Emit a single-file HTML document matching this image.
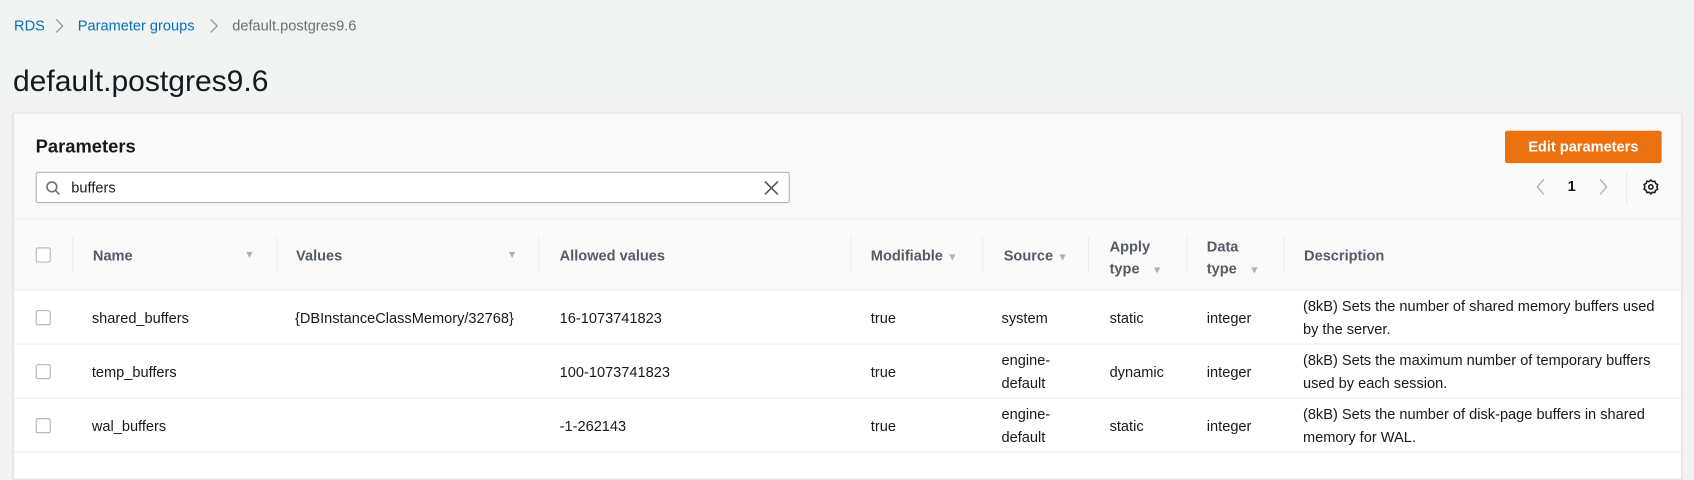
<!DOCTYPE html>
<html><head><meta charset="utf-8"><style>
*{box-sizing:border-box;margin:0;padding:0}
html,body{width:1694px;height:452px;overflow:hidden;background:#f2f3f3}
#w{position:absolute;left:0;top:0;width:1568px;height:419px;transform:scale(1.0804);transform-origin:0 0;font-family:"Liberation Sans",sans-serif;color:#16191f;font-size:13.5px}
.a{position:absolute;white-space:nowrap}
.bc{top:16px;font-size:13.5px}
.link{color:#0073bb}
.card{position:absolute;left:12px;top:104px;width:1545px;height:340px;background:#fff;border:1px solid #e1e4e4;box-shadow:0 1px 2px rgba(0,0,0,.15)}
.top{position:absolute;left:0;top:0;width:100%;height:98px;background:#fafafa;border-bottom:1px solid #eaeded}
.th{position:absolute;left:0;top:98px;width:100%;height:66px;background:#fafafa;border-bottom:1px solid #eaeded}
.row{position:absolute;left:0;width:100%;height:50px;border-bottom:1px solid #eaeded}
.h{color:#545b64;font-weight:bold;font-size:13.5px}
.cb{position:absolute;width:14px;height:14px;border:1px solid #aab7b8;border-radius:2px;background:#fff}
.div{position:absolute;top:16px;width:1px;height:34px;background:#eaeded}
.tri{color:#aab7b8;font-size:10px}
</style></head><body><div id="w">
<div class="a bc link" style="left:13px">RDS</div>
<svg class="a" style="left:51px;top:17px" width="8" height="14" viewBox="0 0 8 14"><path d="M1 1L7 7L1 13" fill="none" stroke="#879596" stroke-width="1.1"/></svg>
<div class="a bc link" style="left:72px">Parameter groups</div>
<svg class="a" style="left:194px;top:17px" width="8" height="14" viewBox="0 0 8 14"><path d="M1 1L7 7L1 13" fill="none" stroke="#879596" stroke-width="1.1"/></svg>
<div class="a bc" style="left:215px;color:#687078">default.postgres9.6</div>
<div class="a" style="left:12px;top:59px;font-size:27.8px">default.postgres9.6</div>
<div class="card">
 <div class="top"></div>
 <div class="a" style="left:20px;top:21px;font-size:17px;font-weight:bold">Parameters</div>
 <div class="a" style="left:1380px;top:16px;width:145px;height:30px;background:#ec7211;color:#fff;font-weight:bold;font-size:13.5px;text-align:center;line-height:30px;border-radius:2px">Edit parameters</div>
 <div class="a" style="left:20px;top:54px;width:698px;height:29px;border:1px solid #aab7b8;background:#fff;border-radius:2px">
  <svg class="a" style="left:8px;top:7px" width="14" height="14" viewBox="0 0 14 14"><circle cx="6" cy="6" r="4.5" fill="none" stroke="#687078" stroke-width="1.5"/><path d="M9.3 9.3L13 13" stroke="#687078" stroke-width="1.5"/></svg>
  <div class="a" style="left:32px;top:6px">buffers</div>
  <svg class="a" style="left:673px;top:7px" width="14" height="14" viewBox="0 0 14 14"><path d="M1 1L13 13M13 1L1 13" stroke="#545b64" stroke-width="1.5"/></svg>
 </div>
 <svg class="a" style="left:1408px;top:60px" width="10" height="16" viewBox="0 0 10 16"><path d="M8 1L2 8L8 15" fill="none" stroke="#aab7b8" stroke-width="1.3"/></svg>
 <div class="a" style="left:1438px;top:60px;font-weight:bold">1</div>
 <svg class="a" style="left:1466px;top:60px" width="10" height="16" viewBox="0 0 10 16"><path d="M2 1L8 8L2 15" fill="none" stroke="#aab7b8" stroke-width="1.3"/></svg>
 <div class="a" style="left:1492px;top:54px;width:1px;height:30px;background:#eaeded"></div>
 <svg class="a" style="left:1507px;top:60px" width="16" height="16" viewBox="0 0 16 16"><circle cx="8" cy="8" r="2" fill="none" stroke="#16191f" stroke-width="1.4"/><path d="M8 1.5l1.5 1.6 2.2-.4.6 2.1 2 1-.8 2.2.8 2.2-2 1-.6 2.1-2.2-.4L8 14.5l-1.5-1.6-2.2.4-.6-2.1-2-1 .8-2.2-.8-2.2 2-1 .6-2.1 2.2.4z" fill="none" stroke="#16191f" stroke-width="1.4" stroke-linejoin="round"/></svg>
 <div class="th">
  <div class="cb" style="left:20px;top:26px"></div>
  <div class="div" style="left:54px"></div>
  <div class="a h" style="left:73px;top:26px">Name</div><div class="a tri" style="left:213px;top:28px">▼</div>
  <div class="div" style="left:243px"></div>
  <div class="a h" style="left:261px;top:26px">Values</div><div class="a tri" style="left:456px;top:28px">▼</div>
  <div class="div" style="left:485px"></div>
  <div class="a h" style="left:505px;top:26px">Allowed values</div>
  <div class="div" style="left:774px"></div>
  <div class="a h" style="left:793px;top:26px">Modifiable <span class="tri">▼</span></div>
  <div class="div" style="left:896px"></div>
  <div class="a h" style="left:916px;top:26px">Source <span class="tri">▼</span></div>
  <div class="div" style="left:994px"></div>
  <div class="a h" style="left:1014px;top:16px;line-height:20px">Apply<br>type &nbsp;&nbsp;<span class="tri">▼</span></div>
  <div class="div" style="left:1085px"></div>
  <div class="a h" style="left:1104px;top:16px;line-height:20px">Data<br>type &nbsp;&nbsp;<span class="tri">▼</span></div>
  <div class="div" style="left:1175px"></div>
  <div class="a h" style="left:1194px;top:26px">Description</div>
 </div>
 <div class="row" style="top:164px">
  <div class="cb" style="left:20px;top:18px"></div>
  <div class="a" style="left:72px;top:18px">shared_buffers</div>
  <div class="a" style="left:260px;top:18px">{DBInstanceClassMemory/32768}</div>
  <div class="a" style="left:505px;top:18px">16-1073741823</div>
  <div class="a" style="left:793px;top:18px">true</div>
  <div class="a" style="left:914px;top:18px">system</div>
  <div class="a" style="left:1014px;top:18px">static</div>
  <div class="a" style="left:1104px;top:18px">integer</div>
  <div class="a" style="left:1193px;top:4px;line-height:21px">(8kB) Sets the number of shared memory buffers used<br>by the server.</div>
 </div>
 <div class="row" style="top:214px">
  <div class="cb" style="left:20px;top:18px"></div>
  <div class="a" style="left:72px;top:18px">temp_buffers</div>
  <div class="a" style="left:505px;top:18px">100-1073741823</div>
  <div class="a" style="left:793px;top:18px">true</div>
  <div class="a" style="left:914px;top:4px;line-height:21px">engine-<br>default</div>
  <div class="a" style="left:1014px;top:18px">dynamic</div>
  <div class="a" style="left:1104px;top:18px">integer</div>
  <div class="a" style="left:1193px;top:4px;line-height:21px">(8kB) Sets the maximum number of temporary buffers<br>used by each session.</div>
 </div>
 <div class="row" style="top:264px">
  <div class="cb" style="left:20px;top:18px"></div>
  <div class="a" style="left:72px;top:18px">wal_buffers</div>
  <div class="a" style="left:505px;top:18px">-1-262143</div>
  <div class="a" style="left:793px;top:18px">true</div>
  <div class="a" style="left:914px;top:4px;line-height:21px">engine-<br>default</div>
  <div class="a" style="left:1014px;top:18px">static</div>
  <div class="a" style="left:1104px;top:18px">integer</div>
  <div class="a" style="left:1193px;top:4px;line-height:21px">(8kB) Sets the number of disk-page buffers in shared<br>memory for WAL.</div>
 </div>
</div>
</div></body></html>
